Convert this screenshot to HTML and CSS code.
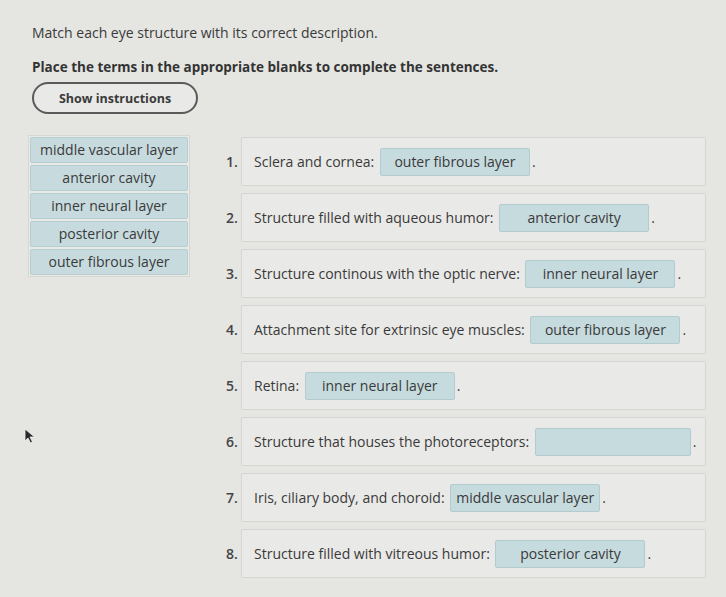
FILE: index.html
```html
<!DOCTYPE html>
<html lang="en">
<head>
  <meta charset="UTF-8" />
  <title>Eye structures</title>
  <link rel="stylesheet" href="styles.css">
</head>
<body>

<div class="page">
  <p class="intro">Match each eye structure with its correct description.</p>
  <p class="lead">Place the terms in the appropriate blanks to complete the sentences.</p>

  <button class="toggle">Show instructions</button>

  <div class="activity">
    <div class="bank">
      <div class="term">middle vascular layer</div>
      <div class="term">anterior cavity</div>
      <div class="term">inner neural layer</div>
      <div class="term">posterior cavity</div>
      <div class="term">outer fibrous layer</div>
    </div>

    <ol class="questions">
      <li><span class="num">1.</span><div class="box">Sclera and cornea: <span class="drop">outer fibrous layer</span>.</div></li>
      <li><span class="num">2.</span><div class="box">Structure filled with aqueous humor: <span class="drop">anterior cavity</span>.</div></li>
      <li><span class="num">3.</span><div class="box">Structure continous with the optic nerve: <span class="drop">inner neural layer</span>.</div></li>
      <li><span class="num">4.</span><div class="box">Attachment site for extrinsic eye muscles: <span class="drop">outer fibrous layer</span>.</div></li>
      <li><span class="num">5.</span><div class="box">Retina: <span class="drop">inner neural layer</span>.</div></li>
      <li><span class="num">6.</span><div class="box">Structure that houses the photoreceptors: <span class="drop empty"></span>.</div></li>
      <li><span class="num">7.</span><div class="box">Iris, ciliary body, and choroid: <span class="drop">middle vascular layer</span>.</div></li>
      <li><span class="num">8.</span><div class="box">Structure filled with vitreous humor: <span class="drop">posterior cavity</span>.</div></li>
    </ol>
  </div>

  <svg class="cursor" width="12" height="16" viewBox="0 0 12 16">
    <path d="M1 1 L1 13 L4 10 L6.5 15 L8.5 14 L6 9 L10.5 9 Z" fill="#2a2a2a" stroke="#f2f2f2" stroke-width="0.8"/>
  </svg>
</div>

</body>
</html>
```

FILE: styles.css
```css
body {
  margin: 0;
  font-family: 'Open Sans', 'Liberation Sans', sans-serif;
  font-size: 14px;
  color: #3a3a3a;
  background: #e5e5e2;
}

.page {
  position: relative;
  padding: 23px 20px 0 32px;
  min-height: 574px;
}

.intro { margin: 0; }
.lead { margin: 16px 0 0; font-size: 13.5px; font-weight: 700; color: #333; }

.toggle {
  margin-top: 6px;
  width: 166px;
  height: 32px;
  border: 2px solid #5a5a5a;
  border-radius: 16px;
  background: #e9e9e7;
  font-family: inherit;
  font-size: 12.5px;
  font-weight: 700;
  color: #3a3a3a;
  cursor: pointer;
}

.activity {
  display: flex;
  align-items: flex-start;
  margin-top: 21px;
  margin-left: -4px;
}

.bank {
  width: 158px;
  padding: 1px;
  border: 1px solid #d6d6d3;
  background: #e9e9e6;
  display: flex;
  flex-direction: column;
  gap: 2px;
}

.term {
  height: 24px;
  line-height: 24px;
  text-align: center;
  background: #c7dbde;
  border: 1px solid #b6cdd1;
  border-radius: 2px;
}

.questions {
  list-style: none;
  margin: 2px 0 0 32px;
  padding: 0;
  flex: 1;
}

.questions li {
  display: flex;
  align-items: center;
  margin-bottom: 7px;
}

.num {
  width: 15px;
  padding-left: 4px;
  font-weight: 600;
  color: #444;
}

.box {
  flex: 1;
  height: 47px;
  display: flex;
  align-items: center;
  padding-left: 12px;
  border: 1px solid #d5d5d2;
  border-radius: 2px;
  background: #e9e9e7;
  white-space: pre;
}

.drop {
  display: inline-block;
  width: 148px;
  height: 26px;
  line-height: 26px;
  margin: 0 2px 0 2px;
  text-align: center;
  background: #c6dbde;
  border: 1px solid #b3cbcf;
  border-radius: 2px;
}

.drop.empty { width: 154px; }

.cursor {
  position: absolute;
  left: 24px;
  top: 428px;
}
```
